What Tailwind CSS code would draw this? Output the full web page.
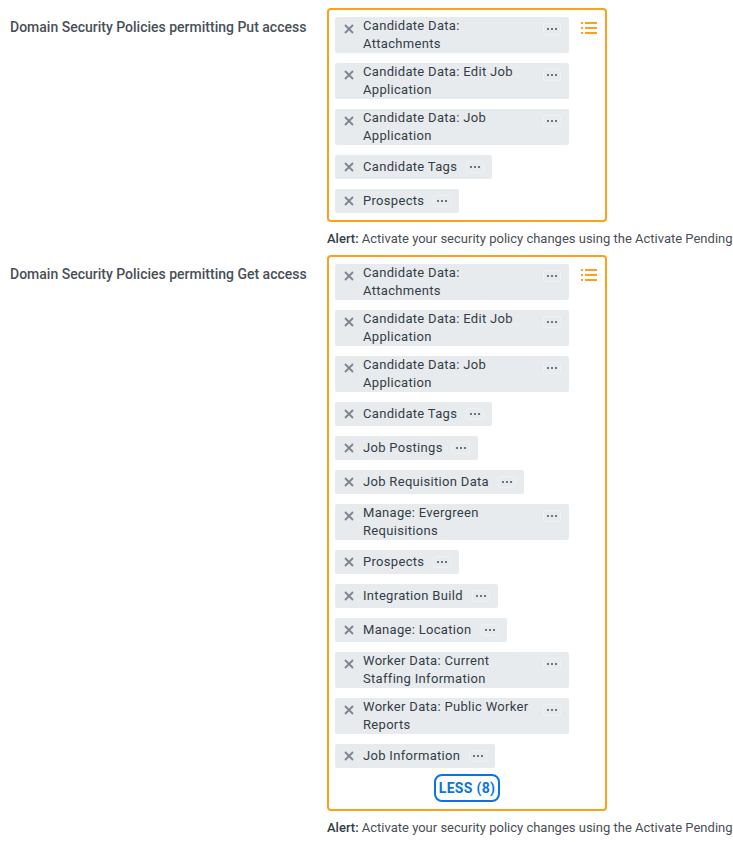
<!DOCTYPE html>
<html lang="en">
<head>
  <meta charset="UTF-8" />
  <title>Domain Security Policies</title>
  <script src="https://cdn.jsdelivr.net/npm/@tailwindcss/browser@4"></script>
</head>
<body class="bg-white overflow-hidden font-['Roboto',sans-serif] text-[14px] text-[#333d47]">
  <div id="app" class="w-[733px] h-[844px] overflow-hidden pt-2"></div>

  <!-- chip template -->
  <template id="chip">
    <div class="chip flex items-start w-fit max-w-[234px] min-h-6 bg-[#e8ebed] rounded-[2px]">
      <svg class="w-[10px] h-[10px] mt-[7px] ml-[9px] mr-[9px] shrink-0" viewBox="0 0 10 10" fill="none" stroke="#7b858f" stroke-width="1.8"><path d="M1 1l8 8M9 1l-8 8" /></svg>
      <span class="name text-[13px] leading-[18px] tracking-[0.31px]"></span>
      <span class="dots flex items-center justify-center gap-[2px] w-[18px] h-[12px] mt-[6px] ml-[9px] mr-2 shrink-0 border border-[#eef0f2] rounded-[2px]">
        <i class="w-[2px] h-[2px] bg-[#6b7580]"></i><i class="w-[2px] h-[2px] bg-[#6b7580]"></i><i class="w-[2px] h-[2px] bg-[#6b7580]"></i>
      </span>
    </div>
  </template>

  <script>
    const sections = [
      {
        label: "Domain Security Policies permitting Put access",
        chips: ["Candidate Data: Attachments", "Candidate Data: Edit Job Application", "Candidate Data: Job Application", "Candidate Tags", "Prospects"]
      },
      {
        label: "Domain Security Policies permitting Get access",
        chips: ["Candidate Data: Attachments", "Candidate Data: Edit Job Application", "Candidate Data: Job Application", "Candidate Tags", "Job Postings", "Job Requisition Data", "Manage: Evergreen Requisitions", "Prospects", "Integration Build", "Manage: Location", "Worker Data: Current Staffing Information", "Worker Data: Public Worker Reports", "Job Information"],
        less: "LESS (8)"
      }
    ];

    const app = document.getElementById("app");
    const chipTpl = document.getElementById("chip");
    const wide = ["Candidate Data", "Manage: Evergreen", "Worker Data"];

    sections.forEach(section => {
      const row = document.createElement("div");
      row.className = "flex";
      row.innerHTML = `
        <div class="w-[327px] shrink-0 pl-[10px] pt-[9px] font-medium leading-[20px] text-[#494f57]">${section.label}</div>
        <div class="w-[406px] shrink-0">
          <div class="box relative w-[280px] border-2 border-[#ff9f1c] rounded-[4px] pt-[7px] pb-[7px] pl-[6px] flex flex-col gap-[10px]">
            <svg class="absolute top-[11px] left-[252px] w-[17px] h-[14px]" viewBox="0 0 17 14" fill="#ff9f1c">
              <rect x="0" y="1" width="2" height="2" /><rect x="4" y="1" width="12" height="2" />
              <rect x="0" y="6" width="2" height="2" /><rect x="4" y="6" width="12" height="2" />
              <rect x="0" y="11" width="2" height="2" /><rect x="4" y="11" width="12" height="2" />
            </svg>
          </div>
          <div class="whitespace-nowrap mt-[8px] mb-[7px] leading-[18px] text-[13px] text-[#494f57]"><b class="font-medium text-[#333d47]">Alert:</b> Activate your security policy changes using the Activate Pending</div>
        </div>`;
      const box = row.querySelector(".box");

      section.chips.forEach(name => {
        const chip = chipTpl.content.cloneNode(true);
        const label = chip.querySelector(".name");
        label.textContent = name;
        if (wide.some(w => name.startsWith(w))) {
          chip.querySelector(".chip").classList.add("w-[234px]");
          label.classList.add("flex-1");
        } else {
          label.classList.add("py-[3px]");
        }
        box.appendChild(chip);
      });

      if (section.less) {
        const wrap = document.createElement("div");
        wrap.className = "w-[264px] flex justify-center -mt-[4px]";
        wrap.innerHTML = `<button class="h-[28px] w-[66px] border-2 border-[#0875e1] rounded-[8px] text-[#0875e1] font-bold leading-none tracking-[0.3px] whitespace-nowrap">${section.less}</button>`;
        box.appendChild(wrap);
      }
      app.appendChild(row);
    });
  </script>
</body>
</html>
